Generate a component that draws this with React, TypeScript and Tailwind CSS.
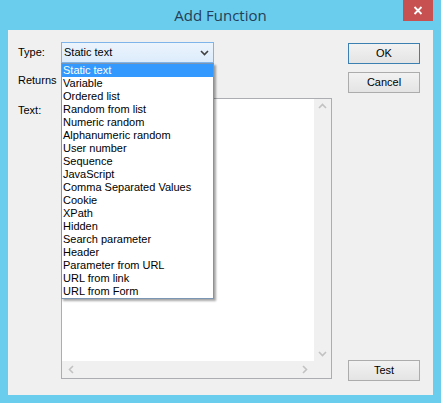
import React from "react";

const items = [
  "Static text",
  "Variable",
  "Ordered list",
  "Random from list",
  "Numeric random",
  "Alphanumeric random",
  "User number",
  "Sequence",
  "JavaScript",
  "Comma Separated Values",
  "Cookie",
  "XPath",
  "Hidden",
  "Search parameter",
  "Header",
  "Parameter from URL",
  "URL from link",
  "URL from Form",
];

function Btn({ label, focused }: { label: string; focused?: boolean }) {
  return (
    <div
      className={`h-[21px] w-[72px] flex items-center justify-center border bg-gradient-to-b from-[#f2f2f2] to-[#e4e4e4] text-[11px] text-black ${
        focused ? "border-[#3c7fb1]" : "border-[#acacac]"
      }`}
    >
      {label}
    </div>
  );
}

export default function App() {
  return (
    <div
      className="w-[441px] h-[403px] bg-[#6bcdee] flex flex-col overflow-hidden"
      style={{ fontFamily: '"Liberation Sans", Arial, sans-serif' }}
    >
      {/* Title bar */}
      <div className="relative h-[30px] flex items-center justify-center shrink-0">
        <span
          className="text-[15px] text-[#233f57] leading-none mt-[1px]"
          style={{ fontFamily: '"Open Sans", "Noto Sans", sans-serif' }}
        >
          Add Function
        </span>
        <div className="absolute right-[8px] top-0 w-[30px] h-[21px] bg-[#c75050] flex items-center justify-center">
          <svg width="10" height="9" viewBox="0 0 10 9">
            <path d="M1.5 1 L8.5 8 M8.5 1 L1.5 8" stroke="#ffffff" strokeWidth="1.8" fill="none" />
          </svg>
        </div>
      </div>

      {/* Client area */}
      <div className="relative mx-[8px] h-[365px] bg-[#f0f0f0] flex pt-[12px] pl-[10px] pr-[13px] pb-[14px] text-[11px] text-black">
        {/* Left column */}
        <div className="flex flex-col w-[314px]">
          <div className="flex items-center h-[21px] shrink-0">
            <span className="w-[43px]">Type:</span>
            <div className="w-[153px] h-[21px] border border-[#7eb4ea] bg-gradient-to-b from-[#ecf4fc] to-[#dcecfc] flex items-center pl-[2px] pr-[4px]">
              <span className="flex-1">Static text</span>
              <svg width="9" height="6" viewBox="0 0 9 6">
                <path d="M1 1 L4.5 4.5 L8 1" stroke="#404040" strokeWidth="1.6" fill="none" />
              </svg>
            </div>
          </div>
          <div className="h-[35px] flex items-center shrink-0">
            <span className="whitespace-nowrap">Returns</span>
          </div>
          <div className="flex flex-1">
            <span className="w-[43px] pt-[4px]">Text:</span>
            <div className="w-[271px] h-[281px] border border-[#abadb3] bg-white flex flex-col">
              <div className="flex flex-1">
                <div className="flex-1 bg-white" />
                <div className="w-[17px] bg-[#f0f0f0] flex flex-col items-center justify-between py-[4px]">
                  <svg width="9" height="6" viewBox="0 0 9 6">
                    <path d="M1 5 L4.5 1.5 L8 5" stroke="#c2c2c2" strokeWidth="1.6" fill="none" />
                  </svg>
                  <svg width="9" height="6" viewBox="0 0 9 6">
                    <path d="M1 1 L4.5 4.5 L8 1" stroke="#c2c2c2" strokeWidth="1.6" fill="none" />
                  </svg>
                </div>
              </div>
              <div className="flex h-[17px]">
                <div className="flex-1 bg-[#f0f0f0] flex items-center justify-between px-[6px]">
                  <svg width="6" height="9" viewBox="0 0 6 9">
                    <path d="M5 1 L1.5 4.5 L5 8" stroke="#c2c2c2" strokeWidth="1.6" fill="none" />
                  </svg>
                  <svg width="6" height="9" viewBox="0 0 6 9">
                    <path d="M1 1 L4.5 4.5 L1 8" stroke="#c2c2c2" strokeWidth="1.6" fill="none" />
                  </svg>
                </div>
                <div className="w-[17px] bg-[#f0f0f0]" />
              </div>
            </div>
          </div>
        </div>

        {/* Right column */}
        <div className="ml-auto w-[72px] flex flex-col pt-[1px]">
          <Btn label="OK" focused />
          <div className="mt-[8px]">
            <Btn label="Cancel" />
          </div>
          <div className="mt-auto">
            <Btn label="Test" />
          </div>
        </div>

        {/* Dropdown list overlay */}
        <div className="absolute left-[53px] top-[33px] w-[153px] border border-[#7a96b4] bg-white shadow-[2px_2px_2px_rgba(0,0,0,0.35)] z-10 flex flex-col">
          {items.map((it, i) => (
            <div
              key={it}
              className={`h-[13px] leading-[13px] pl-[1px] whitespace-nowrap ${
                i === 0 ? "bg-[#3399ff] text-white" : "text-black"
              }`}
            >
              {it}
            </div>
          ))}
        </div>
      </div>
    </div>
  );
}
